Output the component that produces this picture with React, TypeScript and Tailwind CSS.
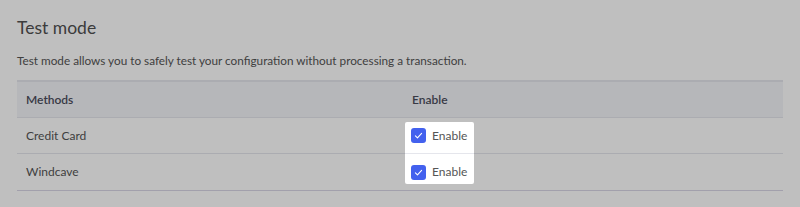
import React from 'react';

const methods = [
  { id: 'cc', name: 'Credit Card', enabled: true },
  { id: 'wc', name: 'Windcave', enabled: true },
];

function Check() {
  return (
    <span className="flex h-[15px] w-[15px] items-center justify-center rounded-[3px] bg-[#4361ee]">
      <svg viewBox="0 0 16 16" className="h-[11px] w-[11px]" fill="none" stroke="#fff" strokeWidth="1.6" strokeLinecap="round" strokeLinejoin="round">
        <path d="M3.5 8.5l3 3 6-6.5" />
      </svg>
    </span>
  );
}

export default function App() {
  return (
    <div className="relative min-h-screen overflow-hidden bg-white px-[17px] pt-[17px] font-['Lato',sans-serif] text-[#555]">
      <h2 className="text-[17.5px] leading-[22px] text-[#505050]">Test mode</h2>
      <p className="mt-[14px] text-[11.75px] leading-[16px] text-[#555]">
        Test mode allows you to safely test your configuration without processing a transaction.
      </p>

      <div className="relative mt-[11px]">
        <div className="grid h-[38px] grid-cols-2 items-center border-b border-t-2 border-[#e5e6ec] bg-[#f3f4f8] text-[12px] font-semibold text-[#4b4d5c]">
          <div className="pl-[9px]">Methods</div>
          <div className="pl-[12px]">Enable</div>
        </div>
        {methods.map((m, i) => (
          <div key={m.id} className={`grid grid-cols-2 items-center border-b text-[12px] ${i === methods.length - 1 ? 'h-[37px] border-[#d8d6e6]' : 'h-[36px] border-[#e5e6ec]'}`}>
            <div className="pl-[9px] text-[#555]">{m.name}</div>
            <label className="flex items-center gap-[6px] pl-[11px] text-[#555]">
              <Check />
              <span>Enable</span>
            </label>
          </div>
        ))}

        {/* tour spotlight */}
        <div className="pointer-events-none absolute left-[388px] top-[42px] h-[62px] w-[69px] rounded-[2px] shadow-[0_0_0_9999px_rgba(0,0,0,0.25)]" />
      </div>
    </div>
  );
}
